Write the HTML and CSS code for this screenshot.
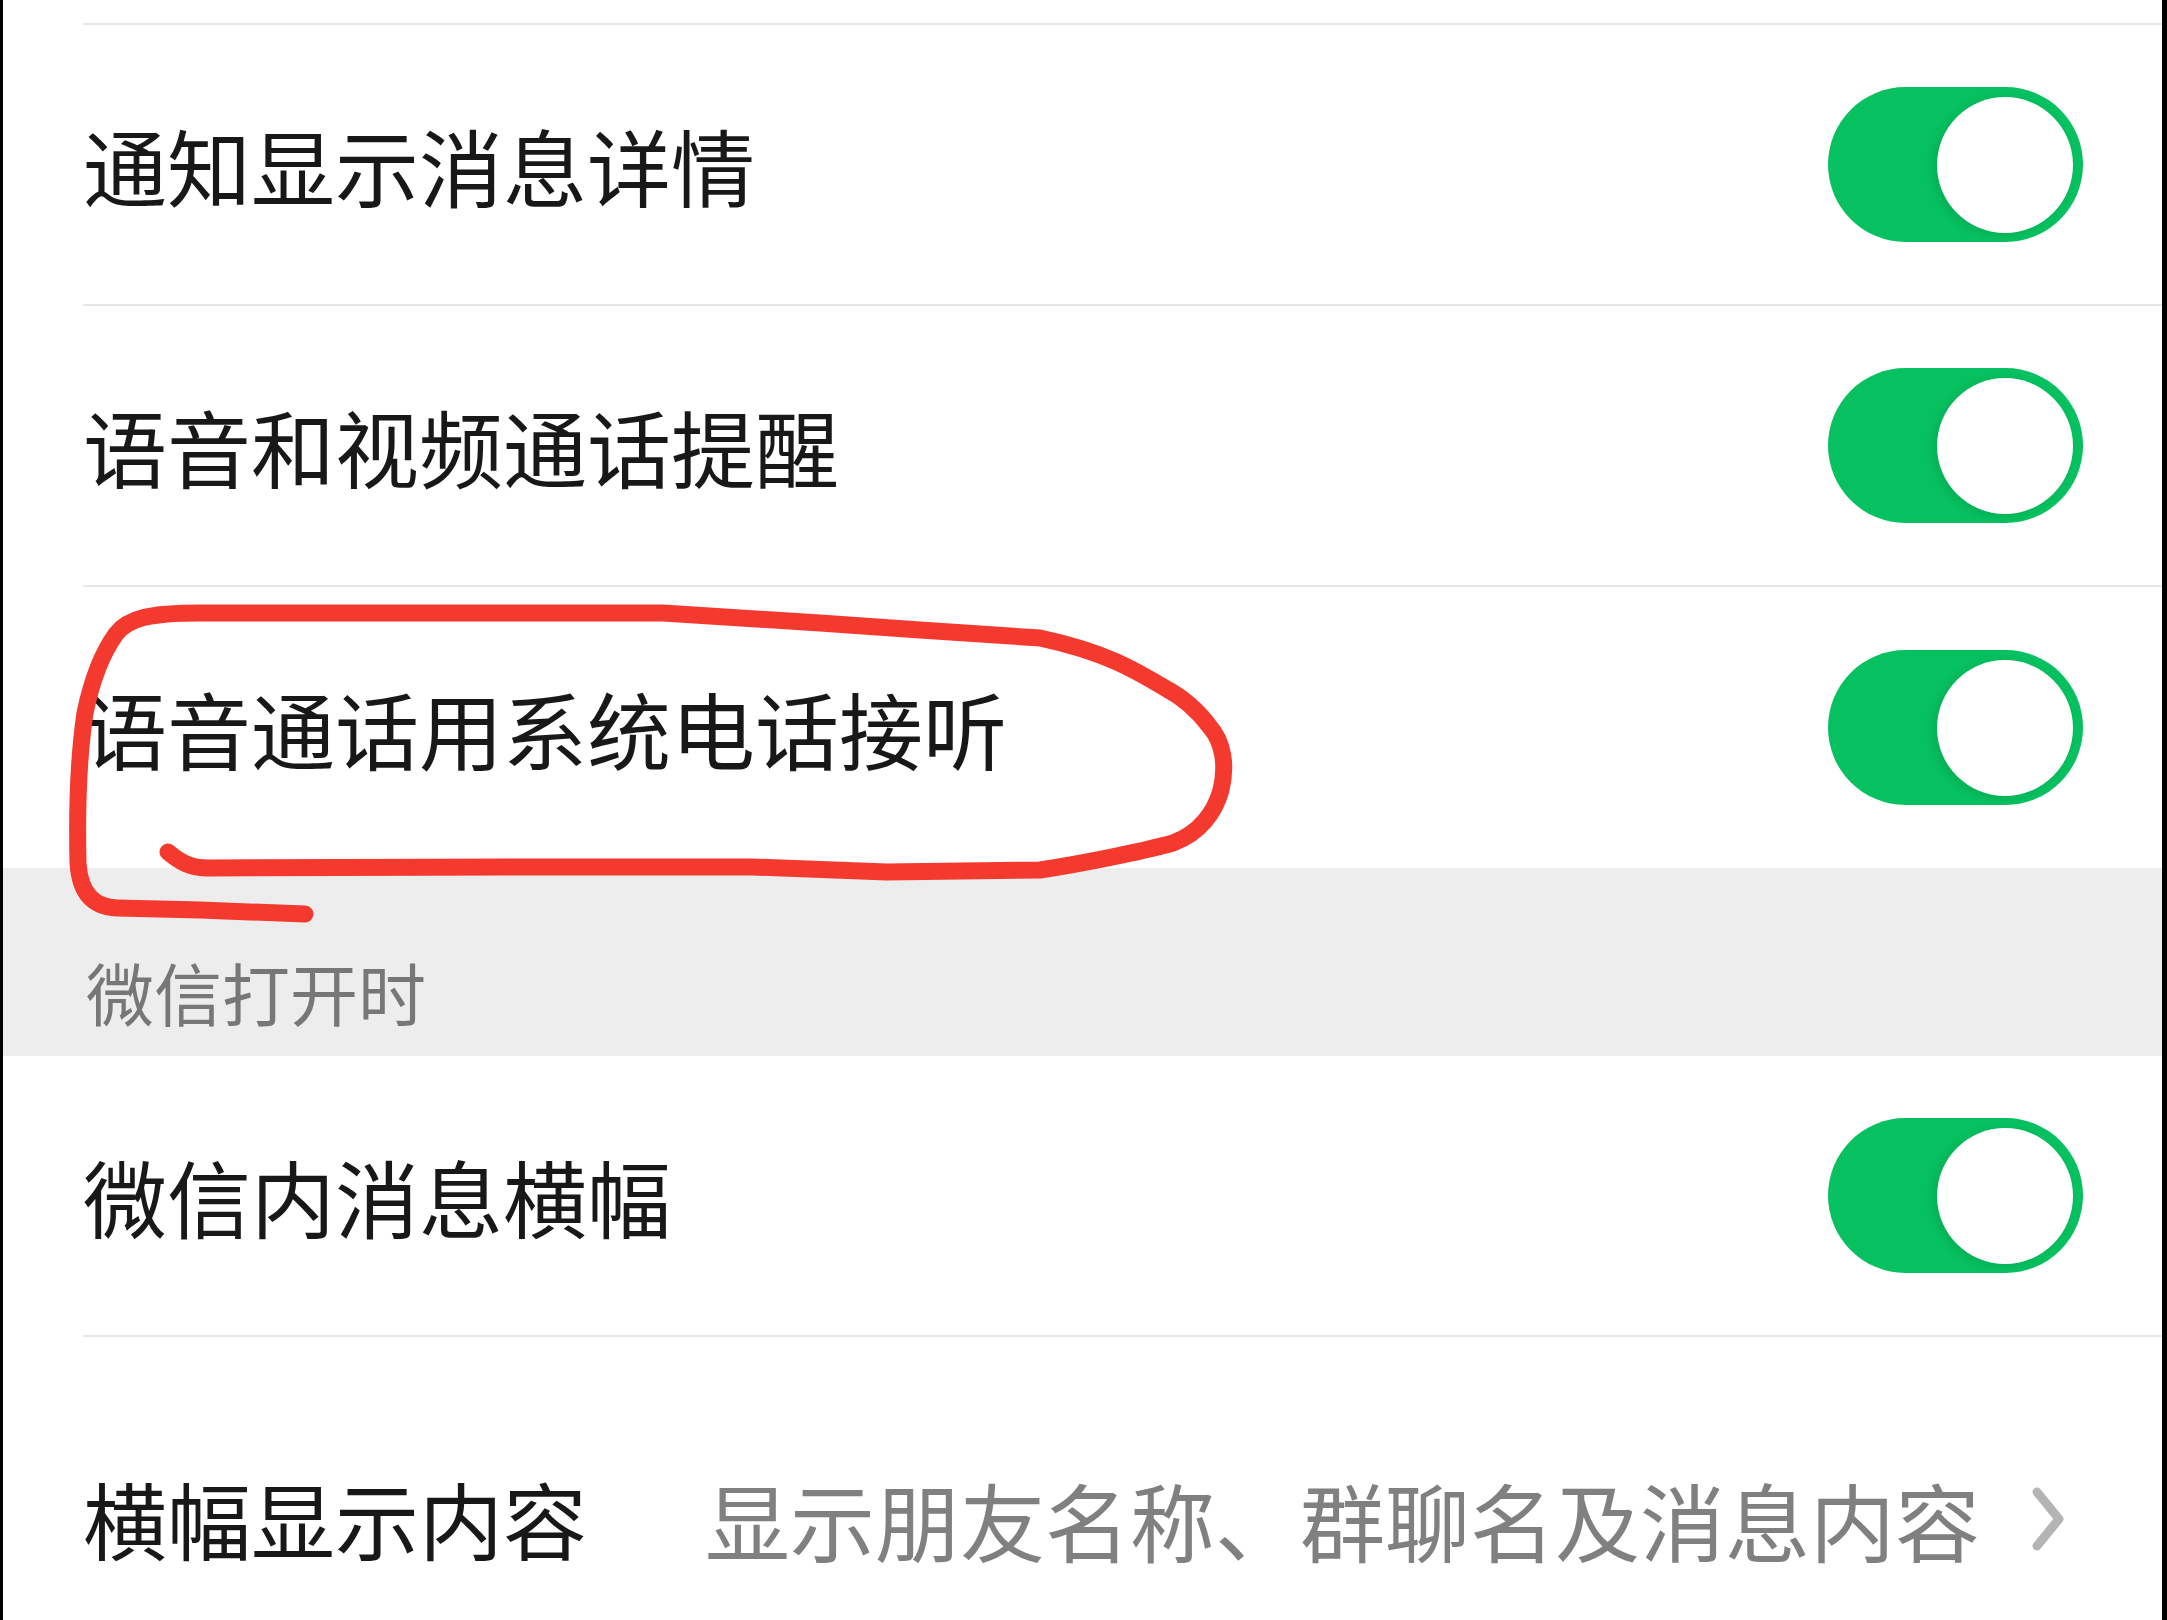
FILE: index.html
```html
<!DOCTYPE html>
<html lang="zh-CN">
<head>
<meta charset="utf-8">
<title>新消息通知</title>
<link rel="stylesheet" href="styles.css">
</head>
<body>
<div class="screen">
  <div class="group">
    <div class="cell cell-partial"><div class="cell-body"></div></div>
    <div class="cell">
      <div class="cell-body">
        <span class="cell-title">通知显示消息详情</span>
        <span class="switch"><span class="knob"></span></span>
      </div>
    </div>
    <div class="cell">
      <div class="cell-body">
        <span class="cell-title">语音和视频通话提醒</span>
        <span class="switch"><span class="knob"></span></span>
      </div>
    </div>
    <div class="cell">
      <div class="cell-body">
        <span class="cell-title">语音通话用系统电话接听</span>
        <span class="switch"><span class="knob"></span></span>
      </div>
    </div>
  </div>

  <div class="section-title">微信打开时</div>

  <div class="group">
    <div class="cell">
      <div class="cell-body">
        <span class="cell-title">微信内消息横幅</span>
        <span class="switch"><span class="knob"></span></span>
      </div>
    </div>
    <div class="cell cell-tall">
      <div class="cell-body">
        <span class="cell-title">横幅显示内容</span>
        <span class="cell-value">
          <span class="value-text">显示朋友名称、群聊名及消息内容</span>
          <svg class="chevron" viewBox="0 0 44 70" width="44" height="70" aria-hidden="true">
            <path d="M11 8 L33 35 L11 62" fill="none" stroke="#b4b4b4" stroke-width="9" stroke-linecap="round" stroke-linejoin="round"/>
          </svg>
        </span>
      </div>
    </div>
  </div>
</div>

<svg class="annotation" viewBox="0 0 2167 1620" width="2167" height="1620" aria-hidden="true">
  <path d="M168 852 C180 862 190 868 208 868 L520 867 L753 867 L887 872 L1040 870 C1080 864 1140 852 1173 843 C1200 833 1215 812 1221 790 C1227 765 1223 742 1210 727 C1196 708 1182 697 1165 688 C1135 670 1105 652 1040 638 L920 630 L820 623 L663 613 L200 613 C150 613 128 618 116 634 C100 656 91 684 85 713 C78 760 77 820 78 863 C80 895 95 907 117 908 L200 910 L305 914"
        fill="none" stroke="#f43a2f" stroke-width="17" stroke-linecap="round" stroke-linejoin="round"/>
</svg>
</body>
</html>
```

FILE: styles.css
```css
html, body {
  margin: 0;
  padding: 0;
  height: 1620px;
  overflow: hidden;
  background: #fff;
}

body {
  position: relative;
  font-family: "Noto Sans CJK SC", "Noto Sans", "Liberation Sans", sans-serif;
  color: #191919;
}

.screen {
  height: 1620px;
  border-left: 3px solid #000;
  border-right: 5px solid #000;
  background: #fff;
  overflow: hidden;
}

.group {
  background: #fff;
}

.cell {
  padding-left: 80px;
  background: #fff;
}

.cell-body {
  box-sizing: content-box;
  height: 279px;
  display: flex;
  align-items: center;
  justify-content: space-between;
  padding-right: 79px;
  border-bottom: 2px solid #e6e6e6;
}

.cell:last-child .cell-body {
  border-bottom: none;
  height: 281px;
}

.cell-partial .cell-body {
  height: 23px;
}

.cell-tall .cell-body,
.cell.cell-tall:last-child .cell-body {
  height: 362px;
  padding-right: 92px;
}

.cell-title {
  font-size: 84px;
  line-height: 1;
  color: #181818;
  white-space: nowrap;
}

.cell-value {
  display: flex;
  align-items: center;
  gap: 46px;
}

.value-text {
  font-size: 85px;
  line-height: 1;
  color: #808080;
  white-space: nowrap;
}

.chevron {
  display: block;
  margin-top: 2px;
}

.switch {
  box-sizing: border-box;
  width: 255px;
  height: 155px;
  border-radius: 78px;
  background: #07c160;
  display: flex;
  align-items: center;
  justify-content: flex-end;
  padding-right: 10px;
  flex-shrink: 0;
}

.knob {
  width: 136px;
  height: 136px;
  border-radius: 50%;
  background: #fff;
  box-shadow: -4px 2px 10px rgba(0, 60, 20, 0.14);
}

.section-title {
  box-sizing: border-box;
  height: 188px;
  padding: 90px 0 0 83px;
  background: #ededed;
  font-size: 68px;
  line-height: 68px;
  color: #777;
}

.annotation {
  position: absolute;
  left: 0;
  top: 0;
  pointer-events: none;
}
```
